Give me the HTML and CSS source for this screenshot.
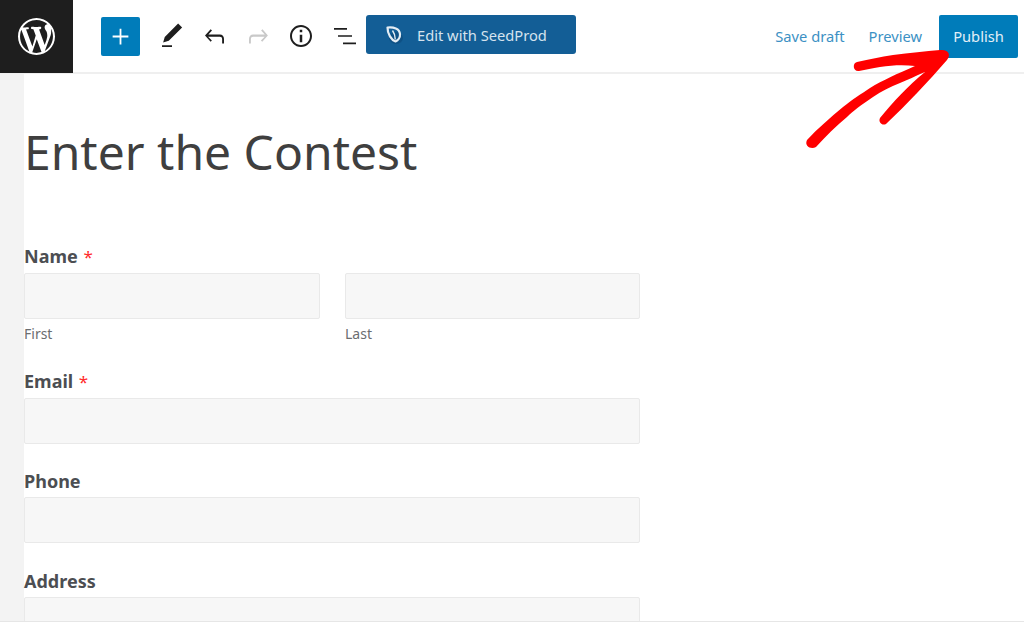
FILE: index.html
```html
<!DOCTYPE html>
<html lang="en">
<head>
<meta charset="utf-8">
<title>Enter the Contest</title>
<link rel="stylesheet" href="styles.css">
</head>
<body>
<header class="topbar">
  <a class="wp-logo" aria-label="WordPress">
    <svg viewBox="0 0 20 20" width="37" height="37"><path fill="#fff" d="M20 10c0-5.510-4.490-10-10-10C4.480 0 0 4.490 0 10c0 5.520 4.480 10 10 10 5.510 0 10-4.480 10-10zM7.780 15.370L4.370 6.220c.55-.02 1.170-.08 1.170-.08.500-.06.440-1.130-.060-1.110 0 0-1.450.110-2.370.110-.180 0-.370 0-.580-.010C4.120 2.690 6.890 1.050 10 1.050c2.320 0 4.430.870 6.030 2.340-.680-.110-1.650.390-1.650 1.580 0 .740.450 1.360.900 2.100.350.610.550 1.360.550 2.460 0 1.490-1.400 5-1.400 5l-3.030-8.350c.540-.020.820-.170.820-.170.500-.050.440-1.250-.060-1.220 0 0-1.440.120-2.380.120-.870 0-2.330-.120-2.330-.120-.500-.030-.560 1.200-.060 1.220l.920.080 1.260 3.410zM17.410 10c.240-.640.740-1.870.430-4.250.700 1.290 1.050 2.710 1.050 4.250 0 3.290-1.730 6.240-4.400 7.780.970-2.590 1.940-5.200 2.920-7.780zM6.100 18.090C3.120 16.650 1.110 13.530 1.110 10c0-1.300.230-2.480.720-3.590C3.250 10.300 4.670 14.200 6.100 18.090zm4.030-6.630l2.580 6.980c-.860.290-1.760.450-2.710.450-.790 0-1.570-.110-2.290-.330.810-2.380 1.620-4.740 2.420-7.100z"/></svg>
  </a>
  <div class="tools">
    <button class="add" aria-label="Add block">
      <svg viewBox="0 0 24 24" width="27" height="27"><path fill="#fff" d="M11.200 5h1.600v6.200H19v1.600h-6.200V19h-1.600v-6.200H5v-1.600h6.200z"/></svg>
    </button>
    <span class="icon">
      <svg viewBox="0 0 24 24" width="30" height="30"><path fill="#1e1e1e" d="M20.100 5.100L16.900 2 6.200 12.700l-1.300 4.400 4.500-1.300L20.100 5.100zM4 20.800h8v-1.500H4v1.500z"/></svg>
    </span>
    <span class="icon">
      <svg viewBox="0 0 24 24" width="30" height="30"><path fill="#1e1e1e" d="M18.300 11.700c-.6-.6-1.400-.9-2.300-.9H6.700l2.900-3.300-1.100-1-4.500 5L8.500 16.500l1-1-3-3h9.400c.5 0 .9.200 1.300.5.300.3.500.8.500 1.300v3.700h1.500v-3.700c0-.9-.3-1.800-.9-2.600z"/></svg>
    </span>
    <span class="icon">
      <svg viewBox="0 0 24 24" width="30" height="30"><path fill="#c9c9c9" d="M15.600 6.500l-1.100 1 2.900 3.300H8c-.9 0-1.700.3-2.300.9-.6.800-.9 1.700-.9 2.600v3.700h1.500v-3.700c0-.5.200-1 .5-1.300.4-.3.800-.5 1.300-.5h9.200L14.300 15.500l1.100 1.100 4.500-5z"/></svg>
    </span>
    <span class="icon">
      <svg viewBox="0 0 24 24" width="30" height="30"><path fill="#1e1e1e" d="M12 3.200c-4.800 0-8.800 3.900-8.800 8.800 0 4.800 3.900 8.800 8.800 8.800 4.800 0 8.800-3.900 8.800-8.800 0-4.800-4-8.800-8.800-8.800zm0 16c-4 0-7.200-3.300-7.200-7.200C4.800 8 8 4.800 12 4.800s7.200 3.300 7.200 7.200c0 4-3.200 7.200-7.200 7.200zM11 17h2v-6h-2v6zm0-8h2V7h-2v2z"/></svg>
    </span>
    <span class="icon">
      <svg viewBox="0 0 24 24" width="30" height="30"><path fill="#1e1e1e" d="M4 5.600h10.400v1.300H4zM7.200 11.300h11.200v1.300H7.200zM11.200 17.200h10.400v1.300H11.200z"/></svg>
    </span>
    <button class="seedprod">
      <svg viewBox="0 0 20 20" width="20" height="20"><ellipse cx="11" cy="13" rx="7" ry="6" fill="#0f5185"/><path fill="none" stroke="#e4edf4" stroke-width="2.200" stroke-linejoin="round" d="M2.500 2.500c6-.6 12 .8 12.500 6.500.3 3.500-2 6.500-4.500 7.500C6.500 15 2.400 9 2.500 2.500z"/><path fill="none" stroke="#e4edf4" stroke-width="1.400" d="M7.500 5.500c1.800 2.500 2.800 5.500 2.800 9"/></svg>
      <span>Edit with SeedProd</span>
    </button>
  </div>
  <div class="actions">
    <a class="link">Save draft</a>
    <a class="link">Preview</a>
    <button class="publish">Publish</button>
  </div>
</header>

<main class="canvas">
  <h1 class="title">Enter the Contest</h1>
  <form class="form">
    <div class="field field-name">
      <div class="label">Name <span class="req">*</span></div>
      <div class="name-row">
        <div class="name-col"><div class="input"></div><div class="sub">First</div></div>
        <div class="name-col"><div class="input"></div><div class="sub">Last</div></div>
      </div>
    </div>
    <div class="field field-email">
      <div class="label">Email <span class="req">*</span></div>
      <div class="input"></div>
    </div>
    <div class="field field-phone">
      <div class="label">Phone</div>
      <div class="input"></div>
    </div>
    <div class="field">
      <div class="label">Address</div>
      <div class="input"></div>
    </div>
  </form>
</main>

<svg class="arrow" viewBox="0 0 1024 622" width="1024" height="622" aria-hidden="true">
  <path fill="#ff0000" d="M807 140C818 128 830 118 843 107C853 99 861 94 870 88C883 80 897 74 915 66C905 65 893 65 880 67C872 68 866 70 859 71C853 72 852 63 857 62C870 59 880 57 893 55C910 53 925 51 940 50C949 49 951 55 947 60C928 82 907 104 886 124C882 126 878 122 880 118C893 102 908 86 925 72C915 76 908 80 900 83C890 87 882 91 873 97C861 105 853 111 847 117C836 126 826 136 816 147C811 150 804 146 807 140Z"/>
</svg>
<div class="page-end"></div>
</body>
</html>
```
FILE: styles.css
```css
html, body {
  margin: 0;
  padding: 0;
  height: 622px;
  overflow: hidden;
  background: #fff;
  font-family: "Noto Sans", "Open Sans", sans-serif;
}
body {
  position: relative;
  display: flex;
  flex-direction: column;
}
button {
  font-family: inherit;
  border: 0;
  cursor: pointer;
}
.topbar {
  display: flex;
  align-items: stretch;
  height: 72px;
  border-bottom: 2px solid #efefef;
  flex: none;
}
.wp-logo {
  width: 73px;
  height: 73px;
  background: #1e1e1e;
  display: flex;
  align-items: center;
  justify-content: center;
}
.tools {
  display: flex;
  align-items: center;
  padding-left: 28px;
}
.add {
  width: 39px;
  height: 39px;
  background: #007cba;
  border-radius: 2px;
  display: flex;
  align-items: center;
  justify-content: center;
  padding: 0;
  margin-right: 17px;
}
.icon {
  width: 30px;
  height: 30px;
  margin-right: 13px;
  display: block;
}
.icon:nth-child(6) {
  margin-right: 7px;
}
.icon svg {
  display: block;
}
.seedprod {
  width: 210px;
  height: 39px;
  background: #135e96;
  color: #d5e3ee;
  border-radius: 3px;
  display: flex;
  align-items: center;
  gap: 12px;
  padding: 0 0 0 19px;
  font-size: 14.700px;
  margin-top: -3px;
}
.actions {
  margin-left: auto;
  display: flex;
  align-items: center;
  padding-right: 6px;
}
.link {
  color: #3c91c4;
  font-size: 14.700px;
  margin-right: 24px;
}
.link:nth-child(2) {
  margin-right: 17px;
}
.publish {
  width: 79px;
  height: 43px;
  background: #007cba;
  color: #e2eff7;
  border-radius: 2px;
  font-size: 14.700px;
  padding: 0;
}
.canvas {
  flex: 1;
  min-height: 0;
  margin-top: 0;
  padding-left: 24px;
  background: linear-gradient(to right, #f3f3f3 24px, #fff 24px);
  overflow: hidden;
}
.title {
  margin: 44px 0 0;
  font-size: 48px;
  font-weight: 400;
  line-height: 68px;
  color: #3f3f3f;
}
.form {
  width: 616px;
  margin-top: 58px;
}
.field {
  margin-bottom: 26px;
}
.label {
  font-size: 18px;
  font-weight: 700;
  line-height: 24px;
  color: #4c4e52;
  margin-bottom: 4px;
}
.field-name .label,
.field-email .label {
  margin-bottom: 5px;
}
.req {
  color: #ff2b2b;
  font-weight: 400;
  font-size: 17px;
  line-height: 1;
  margin-left: 1px;
}
.input {
  height: 44px;
  background: #f7f7f7;
  border: 1px solid #e9e9e9;
  border-radius: 2px;
}
.name-row {
  display: grid;
  grid-template-columns: 296px 295px;
  column-gap: 25px;
}
.sub {
  font-size: 14px;
  line-height: 19px;
  color: #6b6d70;
  margin-top: 5px;
}
.field-name {
  margin-bottom: 26px;
}
.field-email {
  margin-bottom: 25px;
}
.field-phone {
  margin-bottom: 26px;
}
.arrow {
  position: absolute;
  left: 0;
  top: 0;
  pointer-events: none;
}
.page-end {
  position: absolute;
  left: 0;
  right: 0;
  bottom: 0;
  height: 1px;
  background: #e6e6e6;
}
```
